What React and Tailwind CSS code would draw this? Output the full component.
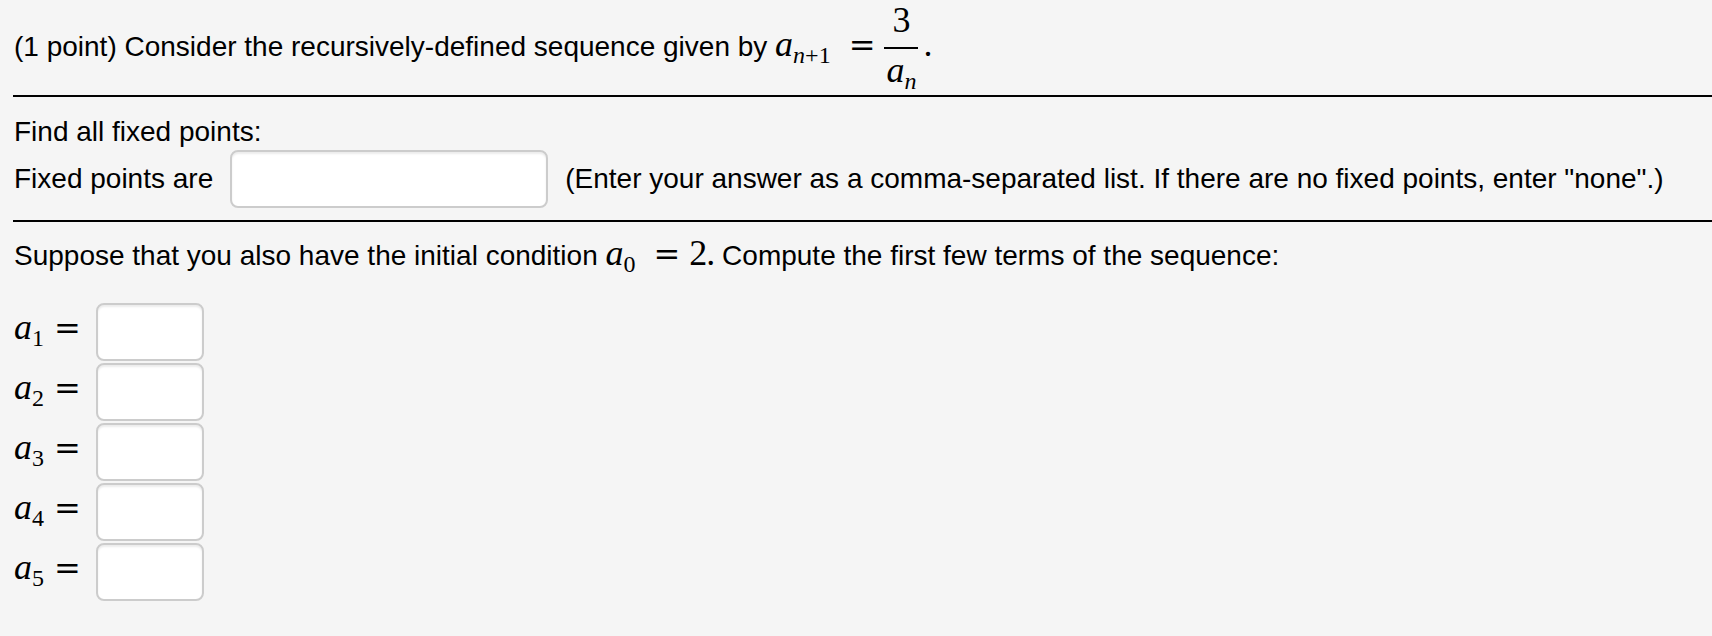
import React from 'react';

const serif = { fontFamily: '"Liberation Serif", "Times New Roman", serif' };
const eqFont = { fontFamily: '"DejaVu Serif", "Liberation Serif", serif' };

function A({ sub, it = false }) {
    return (
        <span className="italic text-[36px] leading-none" style={serif}>
            a
            <span className={`text-[24px] leading-none align-[-7px] ${it ? 'italic' : 'not-italic'}`}>{sub}</span>
        </span>
    );
}

function Eq({ className = '' }) {
    return <span className={`text-[32px] leading-none ${className}`} style={eqFont}>=</span>;
}

function Field({ className = '' }) {
    return (
        <input
            type="text"
            className={`bg-white border-2 border-[#cccccc] rounded-[8px] shadow-[inset_0_2px_2px_rgba(0,0,0,0.08)] outline-none ${className}`}
        />
    );
}

function Rule() {
    return <div className="h-[2px] bg-black" />;
}

export default function App() {
    const rows = ['1', '2', '3', '4', '5'];

    return (
        <div
            className="min-h-screen bg-[#f5f5f5] text-black text-[28px] leading-[40px] pl-[13px] pt-[2px]"
            style={{ fontFamily: '"Liberation Sans", Arial, sans-serif' }}
        >
            {/* Question */}
            <div className="pl-px">
                (1 point) Consider the recursively-defined sequence given by{' '}
                <span className="italic text-[36px] leading-none" style={serif}>
                    a<span className="text-[24px] leading-none align-[-7px]">n<span className="not-italic">+1</span></span>
                </span>
                <Eq className="ml-[18px]" />
                <span className="inline-flex flex-col items-center align-[24px] ml-[9px]" style={serif}>
                    <span className="text-[36px] leading-none pb-[9px]">3</span>
                    <span className="h-[2px] w-full bg-black" />
                    <span className="px-[2px] pt-[3px]">
                        <A sub="n" it />
                    </span>
                </span>
                <span className="text-[36px] leading-none ml-[5px]" style={serif}>.</span>
            </div>

            <div className="mt-[2px]">
                <Rule />
            </div>

            {/* Fixed points */}
            <div className="mt-[15px] pl-px">Find all fixed points:</div>
            <div className="-mt-[2px] flex items-start pl-px">
                <span className="mt-[9px]">Fixed points are</span>
                <Field className="ml-[17px] w-[318px] h-[58px]" />
                <span className="mt-[9px] ml-[17px] whitespace-nowrap">
                    (Enter your answer as a comma-separated list. If there are no fixed points, enter "none".)
                </span>
            </div>

            <div className="mt-[12px]">
                <Rule />
            </div>

            {/* Initial condition */}
            <div className="mt-[13px] pl-px">
                Suppose that you also have the initial condition{' '}
                <A sub="0" />
                <Eq className="ml-[18px]" />
                <span className="text-[36px] leading-none ml-[9px]" style={serif}>2</span>
                <span className="text-[36px] leading-none -ml-[1px] -mr-[1px]" style={serif}>.</span>
                {' '}Compute the first few terms of the sequence:
            </div>

            <div className="mt-[27px] flex flex-col gap-[2px] pl-px">
                {rows.map((r) => (
                    <div key={r} className="flex items-center">
                        <div className="w-[82px] flex items-baseline pb-[6px]">
                            <A sub={r} />
                            <Eq className="ml-[10px]" />
                        </div>
                        <Field className="w-[108px] h-[58px]" />
                    </div>
                ))}
            </div>
        </div>
    );
}
